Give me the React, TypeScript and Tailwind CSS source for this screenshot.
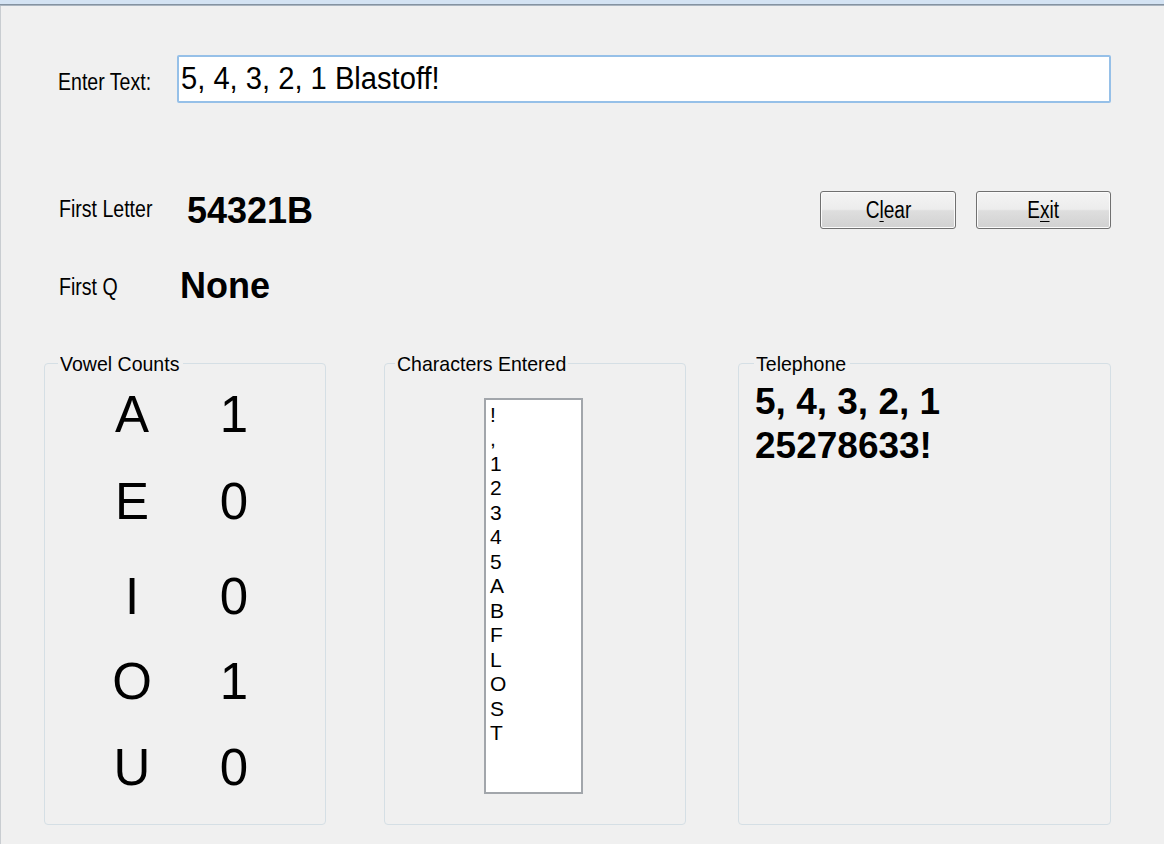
import React from "react";

const chars = ["!", ",", "1", "2", "3", "4", "5", "A", "B", "F", "L", "O", "S", "T"];

const vowels = [
  { l: "A", n: "1", mt: "mt-[15px]" },
  { l: "E", n: "0", mt: "mt-[36px]" },
  { l: "I", n: "0", mt: "mt-[44px]" },
  { l: "O", n: "1", mt: "mt-[34px]" },
  { l: "U", n: "0", mt: "mt-[35px]" },
];

function WinButton({ pre, key1, post, w }: { pre: string; key1: string; post: string; w: string }) {
  return (
    <button
      className={`${w} h-[38px] rounded-[3px] border border-[#707070] bg-[linear-gradient(to_bottom,#f4f4f4_0%,#ececec_48%,#dedede_52%,#d1d1d1_100%)] shadow-[inset_0_0_0_1px_#fbfbfb] flex items-center justify-center text-black`}
    >
      <span className="inline-block text-[23px] leading-[23px] scale-x-[0.83] origin-center whitespace-nowrap">
        {pre}
        <span className="underline underline-offset-[3px] decoration-1">{key1}</span>
        {post}
      </span>
    </button>
  );
}

function Legend({ text, ml, w }: { text: string; ml: string; w: string }) {
  return (
    <legend className={`${ml} ${w} px-[2px] text-[21px] leading-[21px] whitespace-nowrap text-black`}>
      <span className="inline-block scale-x-[0.93] origin-left">{text}</span>
    </legend>
  );
}

export default function App() {
  return (
    <div className="w-[1164px] h-[844px] bg-[#f0f0f0] overflow-hidden flex flex-col font-['Liberation_Sans',Arial,sans-serif] text-black">
      <div className="h-[4px] bg-[#d4e3f3] shrink-0" />
      <div className="h-[1px] bg-[#8593a1] shrink-0" />
      <div className="h-[1px] bg-[#aab5c0] shrink-0" />
      <div className="flex-1 flex flex-col border-l border-[#c9cdd1]">
        {/* Row 1: Enter Text */}
        <div className="mt-[49px] flex items-start h-[48px]">
          <div className="ml-[57px] w-[119px] mt-[16px] text-[23px] leading-[23px] whitespace-nowrap">
            <span className="inline-block scale-x-[0.85] origin-left">Enter Text:</span>
          </div>
          <div className="w-[934px] h-[48px] border-2 border-[#96c0e8] rounded-[2px] bg-white flex items-center pl-[2px] overflow-hidden">
            <span className="inline-block text-[31px] leading-[44px] scale-x-[0.94] origin-left whitespace-nowrap">
              5, 4, 3, 2, 1 Blastoff!
            </span>
          </div>
        </div>

        {/* Row 2: First Letter + buttons */}
        <div className="mt-[88px] flex items-start h-[38px]">
          <div className="ml-[58px] w-[128px] mt-[7px] text-[23px] leading-[23px] whitespace-nowrap">
            <span className="inline-block scale-x-[0.85] origin-left">First Letter</span>
          </div>
          <div className="mt-[1.5px] text-[36px] leading-[36px] font-bold">54321B</div>
          <div className="ml-auto mr-[53px] flex gap-[20px]">
            <WinButton pre="C" key1="l" post="ear" w="w-[136px]" />
            <WinButton pre="E" key1="x" post="it" w="w-[135px]" />
          </div>
        </div>

        {/* Row 3: First Q */}
        <div className="mt-[34px] flex items-start h-[40px]">
          <div className="ml-[58px] w-[121px] mt-[12.5px] text-[23px] leading-[23px] whitespace-nowrap">
            <span className="inline-block scale-x-[0.85] origin-left">First Q</span>
          </div>
          <div className="mt-[4.5px] text-[36px] leading-[36px] font-bold">None</div>
        </div>

        {/* Row 4: group boxes */}
        <div className="mt-[49.5px] flex items-start">
          <fieldset className="ml-[43px] w-[282px] border border-[#d5dfe5] rounded-[4px]">
            <Legend text="Vowel Counts" ml="ml-[13px]" w="w-[125px]" />
            <div className="h-[450px] flex flex-col">
              {vowels.map((v) => (
                <div key={v.l} className={`${v.mt} ml-[57px] flex gap-[42px] h-[51px]`}>
                  <span className="w-[60px] text-center text-[51px] leading-[51px]">{v.l}</span>
                  <span className="w-[60px] text-center text-[51px] leading-[51px]">{v.n}</span>
                </div>
              ))}
            </div>
          </fieldset>

          <fieldset className="ml-[58px] w-[302px] border border-[#d5dfe5] rounded-[4px]">
            <Legend text="Characters Entered" ml="ml-[10px]" w="w-[173px]" />
            <div className="h-[450px] flex flex-col pt-[24.5px]">
              <div className="ml-[99px] w-[99px] h-[396px] border-2 border-[#a2a6ab] bg-white pt-[2.5px] pl-[4px] overflow-hidden">
                {chars.map((c, i) => (
                  <div key={i} className="text-[21px] leading-[24.5px] h-[24.5px]">
                    {c}
                  </div>
                ))}
              </div>
            </div>
          </fieldset>

          <fieldset className="ml-[52px] w-[373px] border border-[#d5dfe5] rounded-[4px]">
            <Legend text="Telephone" ml="ml-[14.5px]" w="w-[96px]" />
            <div className="h-[450px] flex flex-col pt-[6.7px]">
              <div className="ml-[16px] font-bold text-[37px] leading-[44px]">
                <div>5, 4, 3, 2, 1</div>
                <div>25278633!</div>
              </div>
            </div>
          </fieldset>
        </div>
      </div>
    </div>
  );
}
